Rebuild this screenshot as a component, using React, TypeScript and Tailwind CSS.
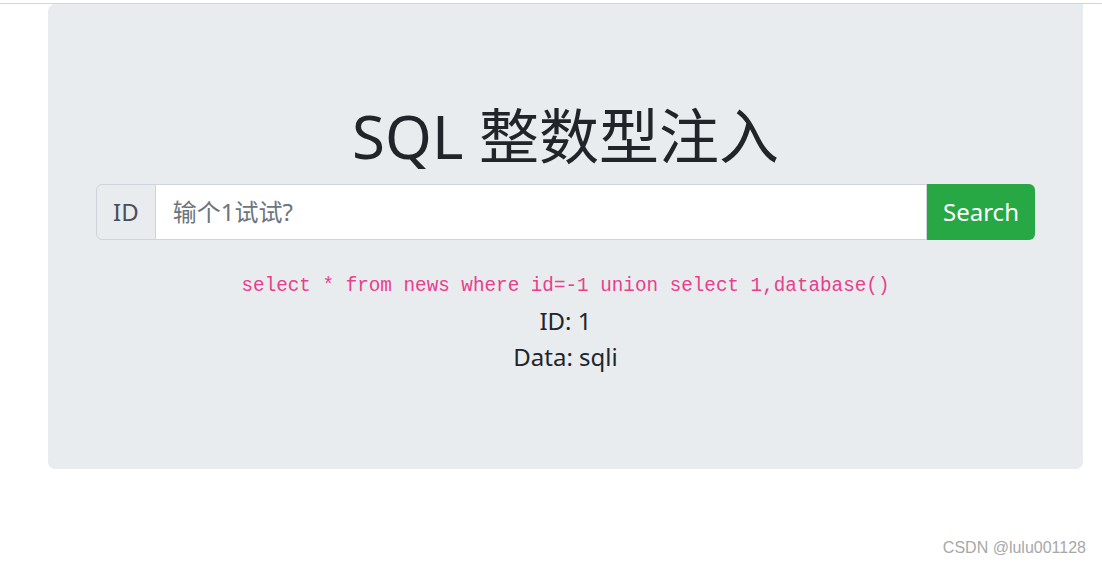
import React from 'react';

const sans = { fontFamily: '"Noto Sans", "Noto Sans CJK SC", sans-serif' };

const App: React.FC = () => {
  return (
    <div className="relative w-[1102px] h-[566px] bg-white overflow-hidden" style={sans}>
      <div className="h-[4px] border-b border-[#d4d4d4]" />
      <div className="ml-[48px] w-[1035px] rounded-b-[7px] rounded-tl-[7px] bg-[#e9ecef] px-[48px] pt-[96px] pb-[94px] text-[#212529]">
        <h1 className="text-center text-[60px] leading-[72px] font-normal mb-[12px]">SQL 整数型注入</h1>
        <div className="flex h-[56px]">
          <span className="flex items-center px-[16px] text-[24px] text-[#495057] bg-[#e9ecef] border border-[#ced4da] rounded-l-[6px]">
            ID
          </span>
          <input
            className="flex-1 min-w-0 bg-white border border-l-0 border-[#ced4da] px-[17px] text-[24px] text-[#495057] placeholder:text-[#6c757d] outline-none"
            style={sans}
            placeholder="输个1试试?"
          />
          <button className="w-[108px] bg-[#28a745] text-white text-[24px] rounded-r-[6px]" style={sans}>
            Search
          </button>
        </div>
        <div className="mt-[29px] text-center text-[24px] leading-[36px]">
          <code
            className="block text-[#e83e8c] text-[19.3px] leading-[34px]"
            style={{ fontFamily: '"Liberation Mono", monospace' }}
          >
            select * from news where id=-1 union select 1,database()
          </code>
          <div>ID: 1</div>
          <div>Data: sqli</div>
        </div>
      </div>
      <div
        className="absolute right-[16px] bottom-[6px] text-[16px] text-[#a8a8a8]"
        style={{ fontFamily: '"Liberation Sans", sans-serif' }}
      >
        CSDN @lulu001128
      </div>
    </div>
  );
};

export default App;
